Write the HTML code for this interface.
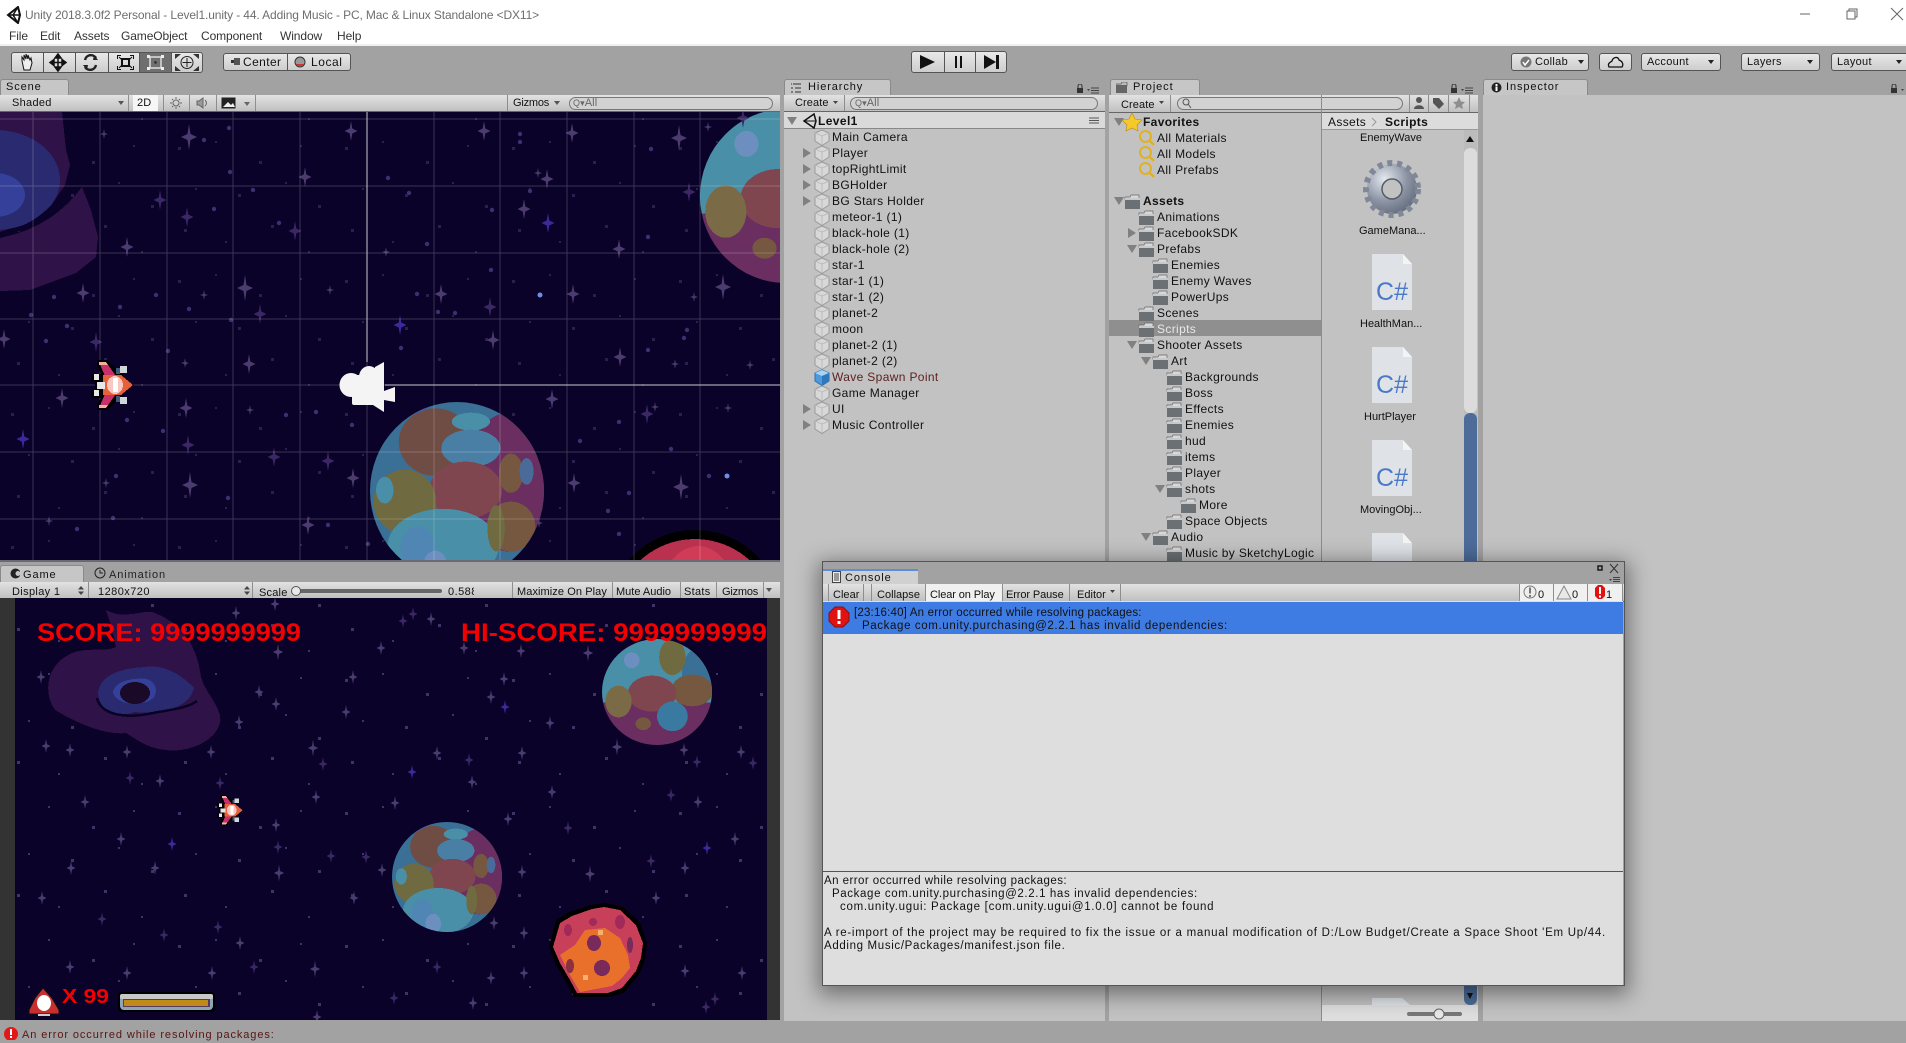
<!DOCTYPE html>
<html><head><meta charset="utf-8"><title>Unity</title>
<style>
html,body{margin:0;padding:0;width:1906px;height:1040px;overflow:hidden;background:#a2a2a2}
div,span,svg{position:absolute}
.b{position:absolute}
.t{position:absolute;font:12px/16px "Liberation Sans",sans-serif;letter-spacing:.35px;white-space:nowrap;color:#111}
.x{font-size:11px;letter-spacing:.1px;color:#111}
.tl{font-size:11px;letter-spacing:.9px;color:#111}
.c{font-size:11px;letter-spacing:.02px;color:#111}
.l{font-size:11.500px;color:#111}
.m{letter-spacing:-.1px;color:#333;top:28px}
.bd{font-weight:bold}
.tb{background:linear-gradient(#e2e2e2,#c0c0c0);border-bottom:1px solid #666}
.sep{width:1px;background:#8e8e8e}
.btn{background:linear-gradient(#e8e8e8,#cdcdcd);border:1px solid #555;border-radius:3px;box-sizing:border-box}
.pill{background:#d2d2d2;border:1px solid #777;border-radius:7px;box-sizing:border-box}
.tab{background:#c6c6c6;border:1px solid #8a8a8a;border-bottom:none;border-radius:3px 3px 0 0;box-sizing:border-box}
</style></head>
<body>
<svg width="0" height="0" style="position:absolute">
<defs>
<path id="sa" d="M0-13L1.500-3 8 0 1.500 3 0 13-1.500 3-8 0-1.500-3Z"/>
<path id="sb" d="M0-10L1.300-2.500 6.500 0 1.300 2.500 0 10-1.300 2.500-6.500 0-1.300-2.500Z"/>
<path id="sc" d="M0-5L.8-1 4 0 .8 1 0 5-.8 1-4 0-.8-1Z"/>
<path id="gb" d="M0-7L1-1.800 4.500 0 1 1.800 0 7-1 1.800-4.500 0-1-1.800Z"/>
<g id="cube"><path d="M7 0L14 3V11L7 15.500 0 11V3Z" fill="#d8d8d8" stroke="#9a9a9a"/><path d="M0 3L7 6 14 3M7 6V15" fill="none" stroke="#bcbcbc"/></g>
<g id="cubeb"><path d="M7 0L14 3V11L7 15.500 0 11V3Z" fill="#4d9bdc" stroke="#2d6fae"/><path d="M0 3L7 6 14 3L7 0Z" fill="#a8d4f4"/><path d="M7 6V15L14 11V3Z" fill="#2f78bd"/></g>
<g id="fld"><path d="M0 2h5l1-2h8v4H0Z" fill="#d8d8d8" stroke="#666" stroke-width=".7"/><rect x="0" y="3" width="15" height="11" fill="#6a7074"/><rect x="0" y="3" width="15" height="2" fill="#c9c9c9"/></g>
<path id="tr" d="M0 0L8 5 0 10Z" fill="#808080"/>
<path id="td" d="M0 0H10L5 8Z" fill="#808080"/>
<g id="mag"><circle cx="6.500" cy="6.500" r="5.500" fill="none" stroke="#e2b020" stroke-width="2"/><path d="M11 11L15 15" stroke="#e2b020" stroke-width="2.500"/></g>
<g id="docu"><path d="M0 0H31L40 10V56H0Z" fill="#dfe3e8"/><path d="M31 0L40 10H31Z" fill="#f4f4f4"/><text x="20" y="46" text-anchor="middle" font-family="Liberation Sans,sans-serif" font-size="25" fill="#4a78c8">C#</text></g>
<g id="ship" shape-rendering="crispEdges">
<path d="M6 0h10l8 8h9v6l-4 3 14 8-14 8 4 3v6h-9l-8 8H6v-6l4-6H0v-8h4v-8H0v-8h10L6 6z" fill="#000"/>
<path d="M8 2h7l10 14H14zM8 48h7l10-14H14z" fill="#c8306a"/>
<path d="M8 2h7l2 3H8zM8 48h7l2-3H8z" fill="#f0b0a0"/>
<path d="M12 15H30L42 25 30 35H12Z" fill="#e8603a"/>
<ellipse cx="24" cy="25" rx="8" ry="9" fill="#f8c8c0"/><rect x="22" y="18" width="5" height="14" fill="#fff"/>
<path d="M29 6h7v7h-7zM29 37h7v7h-7z" fill="#cfd6dc"/><path d="M25 8h4v6h-4zM25 36h4v6h-4z" fill="#3a5a78"/>
<path d="M3 14h5v6H3zM3 30h5v6H3zM6 22h8v7H6z" fill="#e8e8e8"/>
</g>
<clipPath id="cp"><circle cx="0" cy="0" r="100"/></clipPath>
<g id="pa" clip-path="url(#cp)">
<rect x="-100" y="-100" width="200" height="200" fill="#3a6f96"/>
<ellipse cx="60" cy="-10" rx="52" ry="78" fill="#6a2f60"/>
<ellipse cx="-25" cy="-55" rx="42" ry="38" fill="#6f4d45"/>
<ellipse cx="16" cy="-78" rx="22" ry="10" fill="#4a8fa8"/>
<ellipse cx="16" cy="-48" rx="34" ry="21" fill="#4a7fa5"/>
<ellipse cx="-60" cy="-94" rx="25" ry="8" fill="#4a5a96"/>
<ellipse cx="10" cy="-1" rx="42" ry="32" fill="#7f4650"/>
<ellipse cx="-60" cy="12" rx="36" ry="36" fill="#6f6a3f"/>
<ellipse cx="-83" cy="-1" rx="10" ry="15" fill="#4a8fa8"/>
<ellipse cx="62" cy="-20" rx="14" ry="22" fill="#75583f"/>
<ellipse cx="80" cy="-22" rx="8" ry="15" fill="#4a6a9a"/>
<ellipse cx="62" cy="40" rx="28" ry="28" fill="#75583f"/>
<ellipse cx="-16" cy="62" rx="64" ry="42" fill="#4a8fa8"/>
<ellipse cx="-45" cy="65" rx="20" ry="25" fill="#4f86b4"/>
<ellipse cx="-25" cy="85" rx="14" ry="18" fill="#6d8fc0"/>
<ellipse cx="45" cy="42" rx="10" ry="26" fill="#6f6a3f"/>
</g>
<g id="pb" clip-path="url(#cp)">
<rect x="-100" y="-100" width="200" height="120" fill="#4a8fa8"/>
<rect x="-100" y="20" width="200" height="80" fill="#6a2f60"/>
<ellipse cx="80" cy="-35" rx="35" ry="50" fill="#3a6f96"/>
<ellipse cx="28" cy="-66" rx="24" ry="34" fill="#6f6a3f"/>
<ellipse cx="-46" cy="-60" rx="14" ry="15" fill="#6d8fc0"/>
<ellipse cx="64" cy="-3" rx="38" ry="30" fill="#75583f"/>
<ellipse cx="-9" cy="3" rx="44" ry="34" fill="#7f4650"/>
<ellipse cx="-70" cy="18" rx="24" ry="30" fill="#7a6a45"/>
<ellipse cx="28" cy="46" rx="28" ry="28" fill="#3a7aa0"/>
<ellipse cx="-25" cy="60" rx="14" ry="12" fill="#75583f"/>
</g>
<g id="bh">
<path d="M-29-83C-10-72 10-85 20-80 45-70 62-50 66-16 70 0 88 15 85 30 80 50 50 60 31 57 10 55 0 45-9 40-25 42-50 35-80 17-92 0-88-25-70-36-55-48-30-40-19-46-22-60-25-72-29-83Z" fill="#2f1248"/>
<path d="M-37 0C-35-20-10-25 10-26 30-30 50-15 59-5 55 15 25 22 0 19-20 25-35 20-37 0Z" fill="#2a2a70"/>
<path d="M-22 0C-22-12 0-16 12-14 24-10 24 5 12 9-5 13-18 10-22 0Z" fill="#34409a"/>
<path d="M-38 5C-34 22-10 26 18 20 40 16 52 15 62 8" fill="none" stroke="#0a0224" stroke-width="2.500"/>
<ellipse cx="0" cy="0" rx="15" ry="11" fill="#1a0a28"/>
</g>
<pattern id="dots" width="167" height="133" patternUnits="userSpaceOnUse">
<g fill="#3f3468"><rect x="11" y="14" width="3" height="3"/><rect x="48" y="8" width="2" height="2"/><rect x="92" y="28" width="3" height="3"/><rect x="133" y="12" width="2" height="2"/><rect x="28" y="55" width="2" height="2"/><rect x="71" y="61" width="3" height="3"/><rect x="118" y="49" width="2" height="2"/><rect x="151" y="72" width="3" height="3"/><rect x="17" y="96" width="3" height="3"/><rect x="58" y="108" width="2" height="2"/><rect x="104" y="92" width="3" height="3"/><rect x="141" y="118" width="2" height="2"/></g>
</pattern>
</defs>
</svg>

<!-- title bar -->
<div class="b" style="left:0;top:0;width:1906px;height:45px;background:#fff"></div>
<div class="b" style="left:0;top:44px;width:1906px;height:2px;background:#f0f0f0"></div>
<svg style="left:5px;top:6px" width="18" height="18" viewBox="0 0 18 18"><path d="M3 9L13 1 15 9 13 17Z" fill="none" stroke="#111" stroke-width="2"/><path d="M3 9H14M13 1L8 9 13 17" fill="none" stroke="#111" stroke-width="1.500"/></svg>
<span class="t" style="left:25px;top:7px;letter-spacing:-.12px;color:#6e6e6e">Unity 2018.3.0f2 Personal - Level1.unity - 44. Adding Music - PC, Mac &amp; Linux Standalone &lt;DX11&gt;</span>
<span class="t m" style="left:9px">File</span>
<span class="t m" style="left:40px">Edit</span>
<span class="t m" style="left:74px">Assets</span>
<span class="t m" style="left:121px">GameObject</span>
<span class="t m" style="left:201px">Component</span>
<span class="t m" style="left:280px">Window</span>
<span class="t m" style="left:337px">Help</span>
<svg style="left:1795px;top:6px" width="111" height="16" viewBox="0 0 111 16" fill="none" stroke="#666"><path d="M5 8H15"/><path d="M52 5h8v8h-8zM54 5V3h8v8h-2"/><path d="M96 2L108 14M108 2L96 14"/></svg>

<!-- toolbar -->
<div class="btn" style="left:11px;top:52px;width:192px;height:21px;overflow:hidden">
 <div class="b" style="left:127px;top:0;width:32px;height:21px;background:#6f6f6f"></div>
 <div class="sep" style="left:31px;top:0;height:21px;background:#555"></div>
 <div class="sep" style="left:63px;top:0;height:21px;background:#555"></div>
 <div class="sep" style="left:96px;top:0;height:21px;background:#555"></div>
 <div class="sep" style="left:127px;top:0;height:21px;background:#555"></div>
 <div class="sep" style="left:159px;top:0;height:21px;background:#555"></div>
</div>
<svg style="left:11px;top:52px" width="192" height="21" viewBox="0 0 192 21">
<path d="M11 9V5l2 3V3l2 4V2l2 5V3l2 5 1-2 1 5-2 7h-6z" fill="#eee" stroke="#111" stroke-width="1"/>
<path d="M47 3V18M40 10.500H54M47 2l-3 4h6zM47 19l-3-4h6zM39 10.500l4-3v6zM55 10.500l-4-3v6z" fill="#111" stroke="#111" stroke-width="1.500"/>
<path d="M85 6A6 6 0 0 0 74 8M74 15A6 6 0 0 0 85 13" fill="none" stroke="#222" stroke-width="2.400"/><path d="M83 3l4 5h-5zM76 18l-4-5h5z" fill="#222"/>
<rect x="111" y="7" width="7" height="7" fill="none" stroke="#111" stroke-width="2"/><path d="M106 3h4v1h-3v3h-1zM123 3h-4v1h3v3h1zM106 18h4v-1h-3v-3h-1zM123 18h-4v-1h3v-3h1z" fill="#111"/><path d="M108 5l3 3M121 5l-3 3M108 16l3-3M121 16l-3-3" stroke="#111"/>
<rect x="139" y="5" width="11" height="11" fill="none" stroke="#ddd" stroke-width="1.500"/><rect x="136" y="3" width="3" height="3" fill="#eee"/><rect x="150" y="3" width="3" height="3" fill="#eee"/><rect x="136" y="15" width="3" height="3" fill="#eee"/><rect x="150" y="15" width="3" height="3" fill="#eee"/><circle cx="144.500" cy="10.500" r="1.200" fill="#222"/>
<circle cx="176" cy="10.500" r="6" fill="none" stroke="#222"/><path d="M176 6V15M171.500 10.500H180.500" stroke="#222"/><path d="M164 2h6l-6 5zM188 2h-6l6 5zM164 19h6l-6-5zM188 19h-6l6-5z" fill="#333"/>
</svg>
<div class="btn" style="left:223px;top:53px;width:128px;height:18px"><div class="sep" style="left:63px;top:0;height:16px;background:#555"></div></div>
<svg style="left:230px;top:56px" width="130" height="12" viewBox="0 0 130 12"><rect x="1" y="4" width="3" height="3" fill="#333"/><rect x="4" y="2" width="6" height="7" fill="#555"/><circle cx="70" cy="6" r="5" fill="#999" stroke="#333"/><path d="M66 8A5 5 0 0 0 74 8Z" fill="#c33"/></svg>
<span class="t" style="left:243px;top:54px;letter-spacing:.4px">Center</span>
<span class="t" style="left:311px;top:54px;letter-spacing:.55px">Local</span>

<div class="btn" style="left:911px;top:51px;width:96px;height:22px"><div class="sep" style="left:32px;top:0;height:20px;background:#555"></div><div class="sep" style="left:63px;top:0;height:20px;background:#555"></div></div>
<svg style="left:911px;top:51px" width="96" height="22" viewBox="0 0 96 22" fill="#111"><path d="M9 4L24 11 9 18Z"/><rect x="44" y="5" width="2" height="12"/><rect x="49" y="5" width="2" height="12"/><path d="M73 4L85 11 73 18Z"/><rect x="85" y="4" width="3" height="14"/></svg>

<div class="btn" style="left:1511px;top:53px;width:78px;height:18px"></div>
<svg style="left:1520px;top:56px" width="12" height="12"><circle cx="6" cy="6" r="5.500" fill="#777"/><path d="M3 6l2 3 4-5" stroke="#fff" fill="none" stroke-width="1.500"/></svg>
<span class="t" style="left:1535px;top:54px;font-size:11px;letter-spacing:.3px">Collab</span>
<svg style="left:1578px;top:60px" width="6" height="4"><path d="M0 0H6L3 4Z" fill="#222"/></svg>
<div class="btn" style="left:1599px;top:53px;width:33px;height:18px"></div>
<svg style="left:1607px;top:55px" width="18" height="14"><path d="M2 12C0 8 4 7 5 6 6 2 11 1 12 5 15 6 17 9 15 12Z" fill="none" stroke="#111" stroke-width="1.300"/></svg>
<div class="btn" style="left:1641px;top:53px;width:80px;height:18px"></div>
<span class="t" style="left:1647px;top:54px;font-size:11px;letter-spacing:.3px">Account</span>
<svg style="left:1708px;top:60px" width="6" height="4"><path d="M0 0H6L3 4Z" fill="#222"/></svg>
<div class="btn" style="left:1741px;top:53px;width:79px;height:18px"></div>
<span class="t" style="left:1747px;top:54px;font-size:11px;letter-spacing:.3px">Layers</span>
<svg style="left:1807px;top:60px" width="6" height="4"><path d="M0 0H6L3 4Z" fill="#222"/></svg>
<div class="btn" style="left:1831px;top:53px;width:82px;height:18px"></div>
<span class="t" style="left:1837px;top:54px;font-size:11px;letter-spacing:.3px">Layout</span>
<svg style="left:1896px;top:60px" width="6" height="4"><path d="M0 0H6L3 4Z" fill="#222"/></svg>

<!-- scene tabs -->
<div class="tab" style="left:0;top:79px;width:69px;height:17px"></div>
<span class="t tl" style="left:6px;top:79px">Scene</span>
<div class="tb b" style="left:0;top:95px;width:780px;height:16px"></div>
<span class="t x" style="left:12px;top:95px;letter-spacing:.3px">Shaded</span>
<svg style="left:118px;top:101px" width="6" height="4"><path d="M0 0H6L3 4Z" fill="#555"/></svg>
<div class="b" style="left:133px;top:95px;width:25px;height:16px;background:#f6f6f6"></div>
<span class="t x" style="left:137px;top:95px">2D</span>
<div class="sep" style="left:128px;top:95px;height:16px"></div>
<div class="sep" style="left:163px;top:95px;height:16px"></div>
<div class="sep" style="left:189px;top:95px;height:16px"></div>
<div class="sep" style="left:216px;top:95px;height:16px"></div>
<div class="sep" style="left:255px;top:95px;height:16px"></div>
<div class="sep" style="left:507px;top:95px;height:16px"></div>
<svg style="left:168px;top:96px" width="100" height="14" fill="none" stroke="#666"><circle cx="8" cy="7" r="3"/><path d="M8 1V3M8 11V13M2 7H4M12 7H14M4 3L5 4M12 3L11 4M4 11L5 10M12 11L11 10"/><path d="M29 5h2l4-3V12L31 9H29Z" fill="#999"/><path d="M37 4C39 6 39 8 37 10"/><rect x="54" y="2" width="13" height="10" fill="#222" stroke="#222"/><path d="M55 11L60 6 63 9 65 7 67 11Z" fill="#eee" stroke="none"/><path d="M76 6H82L79 10Z" fill="#666" stroke="none"/></svg>
<span class="t x" style="left:513px;top:95px;letter-spacing:-.2px">Gizmos</span>
<svg style="left:554px;top:101px" width="6" height="4"><path d="M0 0H6L3 4Z" fill="#555"/></svg>
<div class="pill" style="left:569px;top:97px;width:204px;height:13px"></div>
<span class="t x" style="left:573px;top:95px;color:#666"><span style="position:static;font-size:9px">Q▾</span>All</span>

<!-- scene art -->
<svg style="left:0;top:112px" width="780" height="448" viewBox="0 112 780 448">
<rect x="0" y="112" width="780" height="448" fill="#0a0229"/>
<rect x="0" y="112" width="780" height="448" fill="url(#dots)" opacity=".6"/>
<g shape-rendering="crispEdges">
<path d="M0 112H62L66 150 70 165 65 185 50 207 20 225 0 232Z" fill="#2f1248"/>
<ellipse cx="-5" cy="180" rx="65" ry="50" fill="#2a2a70"/>
<ellipse cx="-5" cy="195" rx="30" ry="22" fill="#34409a"/>
<path d="M0 238C40 230 65 210 82 187L91 210 98 237 96 257 76 273 30 290 0 291Z" fill="#2f1248"/>
<path d="M0 234C30 230 55 210 68 185" fill="none" stroke="#0a0229" stroke-width="4"/>
<use href="#pb" transform="translate(786 196) scale(.86 .87)"/>
<use href="#pa" transform="translate(457 491) scale(.87 .89)"/>
<circle cx="695" cy="618" r="88" fill="#000"/><circle cx="695" cy="620" r="81" fill="#b9314f"/><ellipse cx="698" cy="618" rx="44" ry="72" fill="#d03c57"/></g>
<g fill="#4b3b6e"><use href="#sa" x="189" y="137"/><use href="#sa" x="679" y="138"/><use href="#sa" x="245" y="288"/><use href="#sa" x="723" y="287"/><use href="#sa" x="190" y="485"/><use href="#sa" x="681" y="487"/>
<use href="#sb" x="351" y="131"/><use href="#sb" x="484" y="131"/><use href="#sb" x="572" y="133"/><use href="#sb" x="305" y="177"/><use href="#sb" x="547" y="179"/><use href="#sb" x="160" y="200" fill="#3a2763"/><use href="#sb" x="187" y="217" fill="#3a2763"/><use href="#sb" x="524" y="209"/><use href="#sb" x="295" y="231" fill="#3a2763"/><use href="#sb" x="127" y="247"/><use href="#sb" x="619" y="249"/><use href="#sb" x="83" y="293"/><use href="#sb" x="260" y="314" fill="#3a2763"/><use href="#sb" x="441" y="294"/><use href="#sb" x="573" y="294"/><use href="#sb" x="490" y="307" fill="#3a2763"/><use href="#sb" x="493" y="340"/><use href="#sb" x="4" y="339"/><use href="#sb" x="96" y="342" fill="#3a2763"/><use href="#sb" x="249" y="364"/><use href="#sb" x="620" y="357"/><use href="#sb" x="62" y="398"/><use href="#sb" x="186" y="408"/><use href="#sb" x="552" y="399"/><use href="#sb" x="647" y="414" fill="#3a2763"/><use href="#sb" x="188" y="445" fill="#3a2763"/><use href="#sb" x="274" y="457" fill="#3a2763"/><use href="#sb" x="328" y="461" fill="#3a2763"/><use href="#sb" x="353" y="478"/><use href="#sb" x="574" y="483"/><use href="#sb" x="308" y="525"/><use href="#sb" x="689" y="192" fill="#3a2763"/><use href="#sb" x="743" y="118" fill="#3a2763"/>
<use href="#sc" x="104" y="134"/><use href="#sc" x="386" y="252"/><use href="#sc" x="330" y="290"/><use href="#sc" x="204" y="295"/><use href="#sc" x="185" y="363"/><use href="#sc" x="250" y="410"/><use href="#sc" x="675" y="364"/><use href="#sc" x="106" y="483"/><use href="#sc" x="49" y="521"/><use href="#sc" x="539" y="523"/><use href="#sc" x="728" y="408"/><use href="#sc" x="538" y="173"/><use href="#sc" x="708" y="127"/><use href="#sc" x="694" y="297"/><use href="#sc" x="655" y="407"/><use href="#sc" x="750" y="365"/></g>
<g fill="#3b2a9c"><use href="#sb" x="548" y="223"/><use href="#sb" x="400" y="325"/><use href="#sb" x="23" y="439"/></g>
<g fill="#3a3270"><circle cx="204" cy="140" r="2.200"/><circle cx="520" cy="134" r="2.200"/><circle cx="520" cy="142" r="2.200"/><circle cx="229" cy="128" r="2.200"/><circle cx="253" cy="190" r="2.200"/><circle cx="409" cy="193" r="2.200"/><circle cx="230" cy="172" r="2.200"/><circle cx="214" cy="209" r="2.200"/><circle cx="530" cy="191" r="2.200"/><circle cx="492" cy="210" r="2.200"/><circle cx="279" cy="223" r="2.200"/><circle cx="427" cy="244" r="2.200"/><circle cx="648" cy="237" r="2.200"/><circle cx="651" cy="149" r="2.200"/><circle cx="388" cy="178" r="2.200"/><circle cx="491" cy="270" r="2.200"/><circle cx="417" cy="294" r="2.200"/><circle cx="156" cy="295" r="2.200"/><circle cx="120" cy="307" r="2.200"/><circle cx="54" cy="297" r="2.200"/><circle cx="189" cy="309" r="2.200"/><circle cx="31" cy="315" r="2.200"/><circle cx="231" cy="320" r="2.200"/><circle cx="455" cy="313" r="2.200"/><circle cx="438" cy="312" r="2.200"/><circle cx="67" cy="326" r="2.200"/><circle cx="46" cy="341" r="2.200"/><circle cx="168" cy="351" r="2.200"/><circle cx="401" cy="348" r="2.200"/><circle cx="687" cy="330" r="2.200"/><circle cx="684" cy="338" r="2.200"/><circle cx="648" cy="350" r="2.200"/><circle cx="316" cy="412" r="2.200"/><circle cx="286" cy="415" r="2.200"/><circle cx="127" cy="420" r="2.200"/><circle cx="352" cy="425" r="2.200"/><circle cx="619" cy="422" r="2.200"/><circle cx="580" cy="441" r="2.200"/><circle cx="163" cy="431" r="2.200"/><circle cx="671" cy="449" r="2.200"/><circle cx="116" cy="476" r="2.200"/><circle cx="228" cy="498" r="2.200"/><circle cx="328" cy="525" r="2.200"/><circle cx="709" cy="476" r="2.200"/><circle cx="629" cy="493" r="2.200"/><circle cx="608" cy="511" r="2.200"/><circle cx="619" cy="534" r="2.200"/><circle cx="368" cy="544" r="2.200"/><circle cx="113" cy="518" r="2.200"/><circle cx="77" cy="529" r="2.200"/></g>
<circle cx="540" cy="295" r="2.500" fill="#6d8fe0"/><circle cx="727" cy="476" r="2.500" fill="#6d8fe0"/>
<g stroke="#fff" stroke-opacity=".2" stroke-width="1" shape-rendering="crispEdges"><path d="M33 112V560M100 112V560M167 112V560M233 112V560M300 112V560M434 112V560M500 112V560M567 112V560M634 112V560M700 112V560M367 362V560M0 119H780M0 186H780M0 253H780M0 319H780M0 385H385M0 452H780M0 519H780"/></g>
<path d="M367 112V362M385 385H780" stroke="#c8c8d0" stroke-width="1" shape-rendering="crispEdges"/>
<use href="#ship" x="91" y="360"/>
<g fill="#f4f4f4"><ellipse cx="351" cy="385" rx="11.500" ry="12"/><ellipse cx="369" cy="377" rx="10" ry="11"/><rect x="352" y="375" width="28" height="30" rx="2"/><path d="M384 391L395 387V402L384 400Z"/><path d="M375 367L384 362V412L373 405Z"/></g>
</svg>
<div class="b" style="left:780px;top:95px;width:4px;height:926px;background:#a2a2a2"></div>

<!-- game tabs -->
<div class="b" style="left:0;top:560px;width:780px;height:2px;background:#6a6a72"></div>
<div class="tab" style="left:0;top:565px;width:84px;height:18px"></div>
<svg style="left:10px;top:568px" width="10" height="11"><circle cx="5.500" cy="5.500" r="5" fill="#222"/><circle cx="8" cy="5.500" r="2.500" fill="#c6c6c6"/></svg>
<span class="t tl" style="left:23px;top:567px">Game</span>
<svg style="left:94px;top:567px" width="12" height="12" fill="none" stroke="#222"><circle cx="6" cy="6" r="5"/><path d="M6 3V6H9"/></svg>
<span class="t tl" style="left:109px;top:567px;color:#222">Animation</span>
<div class="tb b" style="left:0;top:582px;width:780px;height:16px"></div>
<span class="t x" style="left:12px;top:584px;letter-spacing:.35px">Display 1</span>
<svg style="left:78px;top:586px" width="6" height="9"><path d="M0 3.500L3 0 6 3.500ZM0 5.500L3 9 6 5.500Z" fill="#444"/></svg>
<div class="sep" style="left:88px;top:582px;height:16px"></div>
<span class="t x" style="left:98px;top:584px;letter-spacing:.45px">1280x720</span>
<svg style="left:244px;top:586px" width="6" height="9"><path d="M0 3.500L3 0 6 3.500ZM0 5.500L3 9 6 5.500Z" fill="#444"/></svg>
<div class="sep" style="left:252px;top:582px;height:16px"></div>
<span class="t x" style="left:259px;top:585px;letter-spacing:.2px">Scale</span>
<div class="b" style="left:295px;top:589px;width:147px;height:4px;background:#666;border-radius:2px"></div>
<div class="b" style="left:291px;top:586px;width:10px;height:10px;background:#e8e8e8;border:1px solid #555;border-radius:50%;box-sizing:border-box"></div>
<div class="b" style="left:448px;top:584px;width:26px;height:16px;overflow:hidden"><span class="t x" style="left:0;top:0;letter-spacing:.45px">0.588</span></div>
<div class="sep" style="left:512px;top:582px;height:16px"></div>
<span class="t x" style="left:517px;top:584px;letter-spacing:.08px">Maximize On Play</span>
<div class="sep" style="left:612px;top:582px;height:16px"></div>
<span class="t x" style="left:616px;top:584px;letter-spacing:0">Mute Audio</span>
<div class="sep" style="left:680px;top:582px;height:16px"></div>
<span class="t x" style="left:684px;top:584px;letter-spacing:.3px">Stats</span>
<div class="sep" style="left:716px;top:582px;height:16px"></div>
<span class="t x" style="left:722px;top:584px;letter-spacing:-.2px">Gizmos</span>
<div class="sep" style="left:763px;top:582px;height:16px"></div>
<svg style="left:766px;top:588px" width="6" height="4"><path d="M0 0H6L3 4Z" fill="#555"/></svg>

<!-- game art -->
<div class="b" style="left:0;top:598px;width:780px;height:422px;background:#333"></div>
<svg style="left:15px;top:598px" width="752" height="422" viewBox="15 598 752 422">
<rect x="15" y="598" width="752" height="422" fill="#0a0229"/>
<rect x="15" y="598" width="752" height="422" fill="url(#dots)"/>
<g shape-rendering="crispEdges"><use href="#bh" transform="translate(135 693)"/>
<use href="#pb" transform="translate(657 692) scale(.55 .53)"/>
<use href="#pa" transform="translate(447 877) scale(.55 .55)"/></g>
<g fill="#4b3b6e"><use href="#sa" transform="translate(313 748) scale(.65)"/><use href="#sa" transform="translate(279 873) scale(.65)"/><use href="#sa" transform="translate(617 747) scale(.65)"/><use href="#sa" transform="translate(590 874) scale(.65)"/><use href="#sa" transform="translate(278 652) scale(.65)"/><use href="#sa" transform="translate(588 653) scale(.65)"/><use href="#sa" transform="translate(315 969) scale(.65)"/>
<use href="#gb" x="236" y="613"/><use href="#gb" x="275" y="604"/><use href="#gb" x="413" y="614" fill="#3a2763"/><use href="#gb" x="431" y="619"/><use href="#gb" x="403" y="621" fill="#3a2763"/><use href="#gb" x="381" y="648"/><use href="#gb" x="464" y="648"/><use href="#gb" x="521" y="651"/><use href="#gb" x="41" y="677"/><use href="#gb" x="353" y="677"/><use href="#gb" x="504" y="679"/><use href="#gb" x="491" y="697"/><use href="#gb" x="259" y="692"/><use href="#gb" x="276" y="704"/><use href="#gb" x="346" y="712"/><use href="#gb" x="239" y="722"/><use href="#gb" x="550" y="723"/><use href="#gb" x="46" y="746"/><use href="#gb" x="70" y="750"/><use href="#gb" x="127" y="752"/><use href="#gb" x="211" y="752"/><use href="#gb" x="437" y="753"/><use href="#gb" x="522" y="753"/><use href="#gb" x="684" y="750"/><use href="#gb" x="741" y="752"/><use href="#gb" x="323" y="764" fill="#3a2763"/><use href="#gb" x="469" y="760" fill="#3a2763"/><use href="#gb" x="697" y="762" fill="#3a2763"/><use href="#gb" x="753" y="763" fill="#3a2763"/><use href="#gb" x="130" y="778" fill="#3a2763"/><use href="#gb" x="160" y="781"/><use href="#gb" x="220" y="783" fill="#3a2763"/><use href="#gb" x="472" y="782"/><use href="#gb" x="552" y="792"/><use href="#gb" x="85" y="802"/><use href="#gb" x="316" y="797"/><use href="#gb" x="698" y="802"/><use href="#gb" x="395" y="803"/><use href="#gb" x="671" y="795" fill="#3a2763"/><use href="#gb" x="508" y="819"/><use href="#gb" x="276" y="825"/><use href="#gb" x="568" y="828" fill="#3a2763"/><use href="#gb" x="735" y="839"/><use href="#gb" x="121" y="839"/><use href="#gb" x="278" y="847" fill="#3a2763"/><use href="#gb" x="331" y="856" fill="#3a2763"/><use href="#gb" x="366" y="857" fill="#3a2763"/><use href="#gb" x="71" y="868"/><use href="#gb" x="155" y="868"/><use href="#gb" x="522" y="872"/><use href="#gb" x="382" y="870"/><use href="#gb" x="651" y="861" fill="#3a2763"/><use href="#gb" x="685" y="868"/><use href="#gb" x="42" y="898"/><use href="#gb" x="354" y="898"/><use href="#gb" x="656" y="898"/><use href="#gb" x="102" y="919" fill="#3a2763"/><use href="#gb" x="218" y="927" fill="#3a2763"/><use href="#gb" x="494" y="923"/><use href="#gb" x="524" y="933"/><use href="#gb" x="164" y="935" fill="#3a2763"/><use href="#gb" x="240" y="943"/><use href="#gb" x="70" y="967"/><use href="#gb" x="254" y="967" fill="#3a2763"/><use href="#gb" x="437" y="967" fill="#3a2763"/><use href="#gb" x="127" y="973"/><use href="#gb" x="212" y="973"/><use href="#gb" x="524" y="973"/><use href="#gb" x="685" y="971"/><use href="#gb" x="742" y="973"/><use href="#gb" x="491" y="978"/><use href="#gb" x="394" y="998" fill="#3a2763"/><use href="#gb" x="473" y="1003"/><use href="#gb" x="715" y="999" fill="#3a2763"/><use href="#gb" x="706" y="1007" fill="#3a2763"/><use href="#gb" x="317" y="1017"/></g>
<g fill="#3b2a9c"><use href="#gb" x="505" y="707"/><use href="#gb" x="412" y="772"/><use href="#gb" x="172" y="844"/><use href="#gb" x="707" y="848"/></g>
<use href="#ship" transform="translate(217 795) scale(.61)"/>
<g shape-rendering="crispEdges">
<path d="M549 947L556 920 569 912 590 905 604 903 622 906 640 922 647 943 645 960 640 973 625 992 610 997 574 997 566 982 556 965Z" fill="#000"/>
<path d="M553 947L560 923 572 916 592 909 604 907 620 910 636 925 643 943 641 958 636 971 622 988 608 993 577 993 570 980 560 963Z" fill="#c83f5a"/>
<path d="M560 955L575 945 585 930 605 928 620 938 628 955 630 968 622 978 612 986 580 992 570 975Z" fill="#e8702a"/>
<ellipse cx="594" cy="943" rx="7" ry="8" fill="#7a2a5a"/><ellipse cx="602" cy="968" rx="8" ry="8" fill="#7a2a5a"/><ellipse cx="570" cy="966" rx="4" ry="7" fill="#8a3040"/><ellipse cx="620" cy="922" rx="5" ry="7" fill="#a02a5a"/><ellipse cx="593" cy="922" rx="4" ry="4" fill="#a02a5a"/><ellipse cx="630" cy="945" rx="3" ry="8" fill="#7a2a5a"/><ellipse cx="568" cy="930" rx="4" ry="6" fill="#a02a5a"/>
<rect x="598" y="930" width="5" height="5" fill="#f8b070"/><rect x="583" y="975" width="5" height="5" fill="#f8b070"/>
</g>
<path d="M29 1010L35 998 43 988 52 998 59 1010 59 1014 29 1014Z" fill="#c83030" stroke="#111"/><ellipse cx="44" cy="1003" rx="7" ry="8" fill="#fff"/><rect x="38" y="1014" width="12" height="2" fill="#ccc"/>
<rect x="118" y="992" width="97" height="20" rx="4" fill="#000"/><rect x="120" y="994" width="93" height="16" rx="4" fill="#8ea4b8"/><rect x="120" y="994" width="93" height="5" rx="2" fill="#c8c8c8"/><rect x="123" y="999" width="87" height="8" fill="#5a3a5a"/><rect x="124" y="1000" width="84" height="6" fill="#c08a18"/>
<g font-family="Liberation Sans,sans-serif" font-weight="bold" fill="#f40000"><text x="37" y="641" font-size="25" textLength="264" lengthAdjust="spacingAndGlyphs">SCORE: 9999999999</text>
<text x="461" y="641" font-size="25" textLength="306" lengthAdjust="spacingAndGlyphs">HI-SCORE: 9999999999</text>
<text x="62" y="1003" font-size="20" textLength="47" lengthAdjust="spacingAndGlyphs">X 99</text></g>
</svg>

<!-- status -->
<svg style="left:3px;top:1026px" width="16" height="14"><circle cx="8" cy="8" r="7" fill="#e01818"/><rect x="7" y="3" width="2" height="6" fill="#fff"/><rect x="7" y="10" width="2" height="2" fill="#fff"/></svg>
<span class="t" style="left:22px;top:1027px;font-size:11px;letter-spacing:.9px;color:#5a1414">An error occurred while resolving packages:</span>

<!-- hierarchy -->
<div class="tab" style="left:784px;top:79px;width:107px;height:17px"></div>
<svg style="left:790px;top:82px" width="12" height="12" stroke="#333"><path d="M3 2H11M5 6H11M5 10H11M1 2H2M1 6H3M1 10H3"/></svg>
<span class="t tl" style="left:808px;top:79px">Hierarchy</span>
<svg style="left:1076px;top:84px" width="30" height="10"><rect x="1" y="4" width="6" height="5" fill="#333"/><path d="M2 4V2a2 2 0 0 1 4 0V4" fill="none" stroke="#333"/><path d="M11 5H14L12.500 7Z" fill="#444"/><path d="M15 4H23M15 6.500H23M15 9H23" stroke="#444"/></svg>
<div class="b" style="left:784px;top:95px;width:321px;height:926px;background:#c2c2c2"></div>
<div class="tb b" style="left:784px;top:95px;width:321px;height:16px"></div>
<span class="t x" style="left:795px;top:95px">Create</span>
<svg style="left:833px;top:101px" width="6" height="4"><path d="M0 0H5L2.500 3Z" fill="#444"/></svg>
<div class="sep" style="left:844px;top:95px;height:16px"></div>
<div class="pill" style="left:850px;top:97px;width:248px;height:13px"></div>
<span class="t x" style="left:855px;top:95px;color:#666"><span style="position:static;font-size:9px">Q▾</span>All</span>
<div class="b" style="left:784px;top:112px;width:321px;height:17px;background:#dadada;border-bottom:1px solid #888;box-sizing:border-box"></div>
<svg style="left:784px;top:112px" width="321" height="460" viewBox="784 112 321 460">
<use href="#td" x="787" y="117"/>
<path d="M804 121L814 114 816 121 814 128Z" fill="none" stroke="#111" stroke-width="1.500"/><path d="M804 121H815" stroke="#111"/>
<path d="M1089 118H1099M1089 120.500H1099M1089 123H1099" stroke="#555"/>
<use href="#cube" x="815" y="130"/><use href="#cube" x="815" y="146"/><use href="#cube" x="815" y="162"/><use href="#cube" x="815" y="178"/><use href="#cube" x="815" y="194"/><use href="#cube" x="815" y="210"/><use href="#cube" x="815" y="226"/><use href="#cube" x="815" y="242"/><use href="#cube" x="815" y="258"/><use href="#cube" x="815" y="274"/><use href="#cube" x="815" y="290"/><use href="#cube" x="815" y="306"/><use href="#cube" x="815" y="322"/><use href="#cube" x="815" y="338"/><use href="#cube" x="815" y="354"/><use href="#cubeb" x="815" y="370"/><use href="#cube" x="815" y="386"/><use href="#cube" x="815" y="402"/><use href="#cube" x="815" y="418"/>
<use href="#tr" x="803" y="148"/><use href="#tr" x="803" y="164"/><use href="#tr" x="803" y="180"/><use href="#tr" x="803" y="196"/><use href="#tr" x="803" y="404"/><use href="#tr" x="803" y="420"/>
</svg>
<span class="t bd" style="left:818px;top:113px;letter-spacing:.4px">Level1</span>
<span class="t" style="left:832px;top:129px">Main Camera</span>
<span class="t" style="left:832px;top:145px">Player</span>
<span class="t" style="left:832px;top:161px">topRightLimit</span>
<span class="t" style="left:832px;top:177px">BGHolder</span>
<span class="t" style="left:832px;top:193px">BG Stars Holder</span>
<span class="t" style="left:832px;top:209px">meteor-1 (1)</span>
<span class="t" style="left:832px;top:225px">black-hole (1)</span>
<span class="t" style="left:832px;top:241px">black-hole (2)</span>
<span class="t" style="left:832px;top:257px">star-1</span>
<span class="t" style="left:832px;top:273px">star-1 (1)</span>
<span class="t" style="left:832px;top:289px">star-1 (2)</span>
<span class="t" style="left:832px;top:305px">planet-2</span>
<span class="t" style="left:832px;top:321px">moon</span>
<span class="t" style="left:832px;top:337px">planet-2 (1)</span>
<span class="t" style="left:832px;top:353px">planet-2 (2)</span>
<span class="t" style="left:832px;top:369px;color:#5c1f1f">Wave Spawn Point</span>
<span class="t" style="left:832px;top:385px">Game Manager</span>
<span class="t" style="left:832px;top:401px">UI</span>
<span class="t" style="left:832px;top:417px">Music Controller</span>

<!-- project -->
<div class="b" style="left:1105px;top:95px;width:4px;height:926px;background:#a2a2a2"></div>
<div class="tab" style="left:1110px;top:79px;width:90px;height:17px"></div>
<svg style="left:1116px;top:82px" width="12" height="12"><path d="M0 2h5l1-2h5v4H0z" fill="#bbb" stroke="#555" stroke-width=".7"/><rect x="0" y="3" width="11" height="8" fill="#666"/></svg>
<span class="t tl" style="left:1133px;top:79px">Project</span>
<svg style="left:1450px;top:84px" width="30" height="10"><rect x="1" y="4" width="6" height="5" fill="#333"/><path d="M2 4V2a2 2 0 0 1 4 0V4" fill="none" stroke="#333"/><path d="M11 5H14L12.500 7Z" fill="#444"/><path d="M15 4H23M15 6.500H23M15 9H23" stroke="#444"/></svg>
<div class="b" style="left:1109px;top:95px;width:369px;height:926px;background:#c2c2c2"></div>
<div class="tb b" style="left:1109px;top:95px;width:369px;height:17px"></div>
<span class="t x" style="left:1121px;top:97px">Create</span>
<svg style="left:1159px;top:101px" width="6" height="4"><path d="M0 0H5L2.500 3Z" fill="#444"/></svg>
<div class="sep" style="left:1170px;top:95px;height:17px"></div>
<div class="pill" style="left:1177px;top:97px;width:226px;height:13px"></div>
<svg style="left:1182px;top:98px" width="10" height="11" fill="none" stroke="#555"><circle cx="4" cy="4" r="3"/><path d="M6 6L9 10"/></svg>
<div class="sep" style="left:1409px;top:95px;height:17px"></div><div class="sep" style="left:1428px;top:95px;height:17px"></div><div class="sep" style="left:1448px;top:95px;height:17px"></div><div class="sep" style="left:1469px;top:95px;height:17px"></div>
<svg style="left:1410px;top:96px" width="60" height="15"><circle cx="9" cy="4" r="3" fill="#555"/><path d="M4 13C4 8 14 8 14 13Z" fill="#555"/><path d="M23 2H29L34 8 29 13 23 7Z" fill="#555"/><path d="M49 1L51 5.500 55 6 52 9 53 13 49 11 45 13 46 9 43 6 47 5.500Z" fill="#8e8e8e"/></svg>
<div class="b" style="left:1321px;top:95px;width:1px;height:926px;background:#8c8c8c"></div>
<div class="b" style="left:1322px;top:113px;width:156px;height:17px;background:#dcdcdc;border-bottom:1px solid #999;box-sizing:border-box"></div>
<div class="b" style="left:1109px;top:320px;width:212px;height:16px;background:#8f8f8f"></div>
<svg style="left:1109px;top:112px" width="369" height="910" viewBox="1109 112 369 910">
<use href="#td" x="1114" y="118"/>
<path d="M1132 113L1135 119 1142 120 1137 125 1138 131 1132 128 1126 131 1127 125 1122 120 1129 119Z" fill="#f6c928" stroke="#b88a10" stroke-width=".6"/>
<use href="#mag" x="1139" y="130"/><use href="#mag" x="1139" y="146"/><use href="#mag" x="1139" y="162"/>
<use href="#td" x="1114" y="197"/>
<use href="#fld" x="1125" y="195"/>
<use href="#fld" x="1139" y="211"/>
<use href="#fld" x="1139" y="227"/><use href="#tr" x="1128" y="228"/>
<use href="#fld" x="1139" y="243"/><use href="#td" x="1127" y="245"/>
<use href="#fld" x="1153" y="259"/><use href="#fld" x="1153" y="275"/><use href="#fld" x="1153" y="291"/>
<use href="#fld" x="1139" y="307"/><use href="#fld" x="1139" y="323"/>
<use href="#fld" x="1139" y="339"/><use href="#td" x="1127" y="341"/>
<use href="#fld" x="1153" y="355"/><use href="#td" x="1141" y="357"/>
<use href="#fld" x="1167" y="371"/><use href="#fld" x="1167" y="387"/><use href="#fld" x="1167" y="403"/><use href="#fld" x="1167" y="419"/><use href="#fld" x="1167" y="435"/><use href="#fld" x="1167" y="451"/><use href="#fld" x="1167" y="467"/>
<use href="#fld" x="1167" y="483"/><use href="#td" x="1155" y="485"/>
<use href="#fld" x="1181" y="499"/><use href="#fld" x="1167" y="515"/>
<use href="#fld" x="1153" y="531"/><use href="#td" x="1141" y="533"/>
<use href="#fld" x="1167" y="547"/>
<path d="M1372 118L1376 122 1372 126" fill="none" stroke="#999"/>
<defs><radialGradient id="gg" cx=".35" cy=".3" r=".8"><stop offset="0" stop-color="#e4e8ee"/><stop offset=".55" stop-color="#8e96a6"/><stop offset="1" stop-color="#5d6676"/></radialGradient></defs>
<circle cx="1392" cy="189" r="25" fill="url(#gg)"/>
<circle cx="1392" cy="189" r="26" fill="none" stroke="#808898" stroke-width="6" stroke-dasharray="5 4.800"/>
<circle cx="1392" cy="189" r="10" fill="#c2c2c2" stroke="#555c6a" stroke-width="1.500"/>
<use href="#docu" x="1372" y="254"/><use href="#docu" x="1372" y="347"/><use href="#docu" x="1372" y="440"/><use href="#docu" x="1372" y="533"/>
<path d="M1372 1005V998H1402L1410 1005Z" fill="#dfe3e8"/>
<rect x="1464" y="130" width="13" height="875" fill="#bcbcbc"/><rect x="1464" y="148" width="13" height="265" rx="6" fill="#dcdcdc"/>
<rect x="1464" y="413" width="13" height="592" rx="6" fill="#4d6c9a"/>
<path d="M1466 142L1470 136 1474 142Z" fill="#111"/>
<rect x="1322" y="1005" width="156" height="16" fill="#dedede"/>
<rect x="1407" y="1012" width="55" height="4" rx="2" fill="#777"/><circle cx="1439" cy="1014" r="5" fill="#e8e8e8" stroke="#666"/>
<path d="M1467 993H1473L1470 999Z" fill="#111"/>
</svg>
<span class="t bd" style="left:1143px;top:114px">Favorites</span>
<span class="t" style="left:1157px;top:130px">All Materials</span>
<span class="t" style="left:1157px;top:146px">All Models</span>
<span class="t" style="left:1157px;top:162px">All Prefabs</span>
<span class="t bd" style="left:1143px;top:193px">Assets</span>
<span class="t" style="left:1157px;top:209px">Animations</span>
<span class="t" style="left:1157px;top:225px">FacebookSDK</span>
<span class="t" style="left:1157px;top:241px">Prefabs</span>
<span class="t" style="left:1171px;top:257px">Enemies</span>
<span class="t" style="left:1171px;top:273px">Enemy Waves</span>
<span class="t" style="left:1171px;top:289px">PowerUps</span>
<span class="t" style="left:1157px;top:305px">Scenes</span>
<span class="t" style="left:1157px;top:321px;color:#e8e8e8">Scripts</span>
<span class="t" style="left:1157px;top:337px">Shooter Assets</span>
<span class="t" style="left:1171px;top:353px">Art</span>
<span class="t" style="left:1185px;top:369px">Backgrounds</span>
<span class="t" style="left:1185px;top:385px">Boss</span>
<span class="t" style="left:1185px;top:401px">Effects</span>
<span class="t" style="left:1185px;top:417px">Enemies</span>
<span class="t" style="left:1185px;top:433px">hud</span>
<span class="t" style="left:1185px;top:449px">items</span>
<span class="t" style="left:1185px;top:465px">Player</span>
<span class="t" style="left:1185px;top:481px">shots</span>
<span class="t" style="left:1199px;top:497px">More</span>
<span class="t" style="left:1185px;top:513px">Space Objects</span>
<span class="t" style="left:1171px;top:529px">Audio</span>
<span class="t" style="left:1185px;top:545px">Music by SketchyLogic</span>
<span class="t" style="left:1328px;top:114px">Assets</span>
<span class="t bd" style="left:1385px;top:114px">Scripts</span>
<span class="t x" style="left:1360px;top:130px;letter-spacing:0">EnemyWave</span>
<span class="t x" style="left:1359px;top:223px;letter-spacing:0">GameMana...</span>
<span class="t x" style="left:1360px;top:316px;letter-spacing:0">HealthMan...</span>
<span class="t x" style="left:1364px;top:409px;letter-spacing:0">HurtPlayer</span>
<span class="t x" style="left:1360px;top:502px;letter-spacing:0">MovingObj...</span>

<!-- inspector -->
<div class="tab" style="left:1483px;top:79px;width:105px;height:17px"></div>
<svg style="left:1491px;top:82px" width="11" height="11"><circle cx="5.500" cy="5.500" r="5" fill="#222"/><rect x="4.500" y="4.500" width="2" height="4.500" fill="#fff"/><rect x="4.500" y="2" width="2" height="2" fill="#fff"/></svg>
<span class="t tl" style="left:1506px;top:79px">Inspector</span>
<svg style="left:1890px;top:84px" width="16" height="10"><rect x="1" y="4" width="6" height="5" fill="#333"/><path d="M2 4V2a2 2 0 0 1 4 0V4" fill="none" stroke="#333"/><path d="M11 5H14L12.500 7Z" fill="#444"/></svg>
<div class="b" style="left:1478px;top:95px;width:5px;height:926px;background:#a2a2a2"></div>
<div class="b" style="left:1483px;top:95px;width:423px;height:926px;background:#c2c2c2"></div>

<!-- console -->
<div class="b" style="left:822px;top:561px;width:803px;height:425px;background:#a2a2a2;border:1px solid #555;box-sizing:border-box;box-shadow:0 5px 20px 4px rgba(0,0,0,.42)"></div>
<div class="b" style="left:823px;top:569px;width:95px;height:16px;background:#d0d0d0;border-top:2px solid #5a8edc;box-sizing:border-box"></div>
<svg style="left:832px;top:571px" width="10" height="13"><rect x=".5" y=".5" width="8" height="11" fill="#eee" stroke="#444"/><path d="M2 3H7M2 5H7M2 7H7M2 9H7" stroke="#444"/></svg>
<span class="t tl" style="left:845px;top:570px">Console</span>
<svg style="left:1595px;top:561px" width="28" height="24"><rect x="3" y="5" width="4" height="4" fill="none" stroke="#111" stroke-width="1.400"/><path d="M15 3L23 12M23 3L15 12" stroke="#333"/><path d="M14 18H17L15.500 20Z" fill="#444"/><path d="M18 16.500H25M18 18.500H25M18 20.500H25" stroke="#444"/></svg>
<div class="tb b" style="left:823px;top:584px;width:801px;height:17px"></div>
<div class="b" style="left:925px;top:584px;width:77px;height:17px;background:#f0f0f0"></div>
<div class="b" style="left:1519px;top:584px;width:103px;height:17px;background:#f0f0f0"></div>
<div class="sep" style="left:828px;top:584px;height:17px"></div><div class="sep" style="left:863px;top:584px;height:17px"></div><div class="sep" style="left:871px;top:584px;height:17px"></div><div class="sep" style="left:925px;top:584px;height:17px"></div><div class="sep" style="left:1002px;top:584px;height:17px"></div><div class="sep" style="left:1069px;top:584px;height:17px"></div><div class="sep" style="left:1120px;top:584px;height:17px"></div><div class="sep" style="left:1519px;top:584px;height:17px"></div><div class="sep" style="left:1553px;top:584px;height:17px"></div><div class="sep" style="left:1587px;top:584px;height:17px"></div><div class="sep" style="left:1622px;top:584px;height:17px"></div>
<span class="t c" style="left:833px;top:587px">Clear</span>
<span class="t c" style="left:877px;top:587px">Collapse</span>
<span class="t c" style="left:930px;top:587px;letter-spacing:-.1px">Clear on Play</span>
<span class="t c" style="left:1006px;top:587px;letter-spacing:-.1px">Error Pause</span>
<span class="t c" style="left:1077px;top:587px">Editor</span>
<svg style="left:1110px;top:590px" width="6" height="4"><path d="M0 0H5L2.500 3Z" fill="#444"/></svg>
<svg style="left:1522px;top:585px" width="90" height="15"><circle cx="8" cy="7" r="6" fill="#eee" stroke="#777"/><rect x="7" y="2.500" width="2" height="6" fill="#777"/><rect x="7" y="10" width="2" height="2" fill="#777"/><path d="M42 1L49 14H35Z" fill="#e8e8e8" stroke="#888"/><path d="M76 0h4l3 3v8l-3 3h-4l-3-3V3Z" fill="#e01212"/><rect x="77" y="2" width="2" height="7" fill="#fff"/><rect x="77" y="10.500" width="2" height="2" fill="#fff"/></svg>
<span class="t c" style="left:1538px;top:587px">0</span>
<span class="t c" style="left:1572px;top:587px">0</span>
<span class="t c" style="left:1606px;top:587px">1</span>
<div class="b" style="left:823px;top:601px;width:800px;height:270px;background:#dedede"></div>
<div class="b" style="left:823px;top:602px;width:800px;height:32px;background:#3e7ce4"></div>
<svg style="left:828px;top:606px" width="22" height="22"><path d="M7 1H15L21 7V15L15 21H7L1 15V7Z" fill="#e01212" stroke="#8a1010"/><rect x="9.500" y="4" width="3" height="9" fill="#fff"/><rect x="9.500" y="15" width="3" height="3" fill="#fff"/></svg>
<span class="t l" style="left:854px;top:605px;letter-spacing:.19px">[23:16:40] An error occurred while resolving packages:</span>
<span class="t l" style="left:862px;top:618px;letter-spacing:.62px">Package com.unity.purchasing@2.2.1 has invalid dependencies:</span>
<div class="b" style="left:823px;top:871px;width:800px;height:114px;background:#dedede;border-top:1px solid #555;box-sizing:border-box"></div>
<span class="t l" style="left:824px;top:873px;letter-spacing:.45px">An error occurred while resolving packages:</span>
<span class="t l" style="left:832px;top:886px;letter-spacing:.62px">Package com.unity.purchasing@2.2.1 has invalid dependencies:</span>
<span class="t l" style="left:840px;top:899px;letter-spacing:.71px">com.unity.ugui: Package [com.unity.ugui@1.0.0] cannot be found</span>
<span class="t l" style="left:824px;top:925px;letter-spacing:.73px">A re-import of the project may be required to fix the issue or a manual modification of D:/Low Budget/Create a Space Shoot 'Em Up/44.</span>
<span class="t l" style="left:824px;top:938px;letter-spacing:.65px">Adding Music/Packages/manifest.json file.</span>
</body></html>
